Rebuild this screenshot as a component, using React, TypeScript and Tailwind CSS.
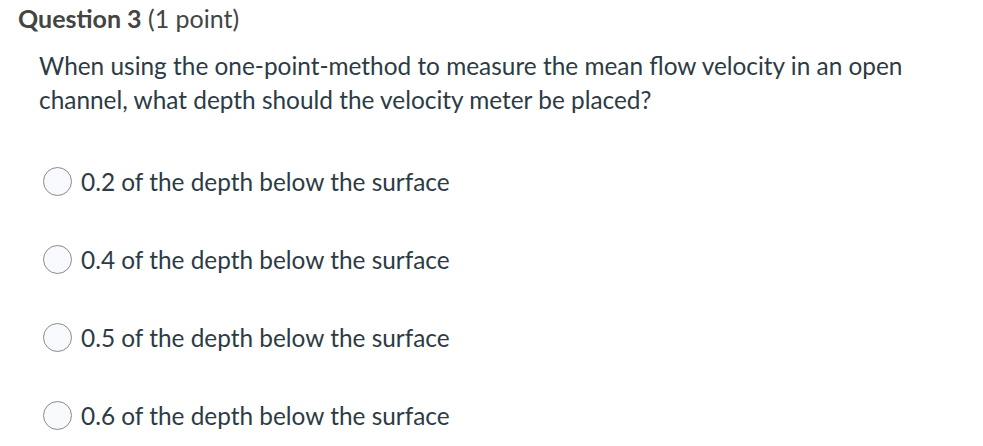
const options = [
  '0.2 of the depth below the surface',
  '0.4 of the depth below the surface',
  '0.5 of the depth below the surface',
  '0.6 of the depth below the surface',
]

export default function App() {
  return (
    <div className="h-[446px] w-[983px] overflow-hidden bg-white font-['Lato',sans-serif] text-[#2d3b45]">
      <h2 className="pl-[18px] pt-[2px] text-[25px] leading-[32px] text-[#444]">
        <span className="font-bold">Question 3</span> (1 point)
      </h2>
      <div className="pl-[39px] pr-[60px] pt-[15px]">
        <p className="text-[24.4px] leading-[34px]">
          When using the one-point-method to measure the mean flow velocity in an open channel, what
          depth should the velocity meter be placed?
        </p>
        <div className="mt-[50px] flex flex-col gap-[49px]">
          {options.map((o) => (
            <label key={o} className="ml-[4px] flex items-center gap-[9px]">
              <span className="h-[29px] w-[29px] shrink-0 rounded-full border border-[#8a8a8a] bg-[#f8f9fc]" />
              <span className="text-[24.4px] leading-[28px]">{o}</span>
            </label>
          ))}
        </div>
      </div>
    </div>
  )
}
